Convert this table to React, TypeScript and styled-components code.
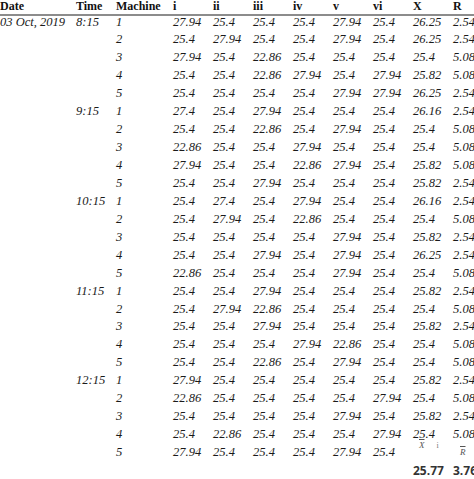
import React from "react"
import styled, { createGlobalStyle } from "styled-components"

const GlobalStyle = createGlobalStyle`
  html, body {
    margin: 0;
    padding: 0;
    background: #fff;
    overflow: hidden;
  }
  body {
    font-family: "Liberation Serif", "Times New Roman", serif;
  }
`

const Table = styled.div`
  width: 474px;
  height: 479px;
  overflow: hidden;
  color: #1a1a1a;
`

const cols = "76px 40px 57px repeat(8, 40px)"

const HeaderRow = styled.div`
  display: grid;
  grid-template-columns: ${cols};
  height: 14px;
  border-bottom: 2px solid #8c8c8c;
  width: 493px;
`

const HeadCell = styled.div`
  font-weight: bold;
  font-size: 12px;
  line-height: 12px;
  color: #111;
  white-space: nowrap;
`

const Body = styled.div`
  margin-top: -2.5px;
`

const Row = styled.div`
  display: grid;
  grid-template-columns: ${cols};
  height: 17.94px;
  width: 493px;
`

const Cell = styled.div<{ $bold?: boolean }>`
  font-style: italic;
  font-size: 12.5px;
  line-height: 17.94px;
  white-space: nowrap;
  ${(p) =>
    p.$bold &&
    `
    font-style: normal;
    font-family: "Open Sans", "Liberation Sans", sans-serif;
    font-weight: bold;
    font-size: 12px;
    color: #333;
  `}
`

const MarkCell = styled.div<{ $top: number; $left: number }>`
  align-self: start;
  display: flex;
  align-items: baseline;
  margin-top: ${(p) => p.$top}px;
  padding-left: ${(p) => p.$left}px;
  font-size: 9px;
  line-height: 9px;
  color: #555;
`

const Mark = styled.span`
  font-style: italic;
  text-decoration: overline;
  text-decoration-thickness: 0.6px;
`

const Tick = styled.span`
  font-size: 8px;
  color: #777;
  margin-left: 12px;
`

const headers = ["Date", "Time", "Machine", "i", "ii", "iii", "iv", "v", "vi", "X", "R"]

const times = ["8:15", "9:15", "10:15", "11:15", "12:15"]

const data: string[][] = [
  ["27.94", "25.4", "25.4", "25.4", "27.94", "25.4", "26.25", "2.54"],
  ["25.4", "27.94", "25.4", "25.4", "27.94", "25.4", "26.25", "2.54"],
  ["27.94", "25.4", "22.86", "25.4", "25.4", "25.4", "25.4", "5.08"],
  ["25.4", "25.4", "22.86", "27.94", "25.4", "27.94", "25.82", "5.08"],
  ["25.4", "25.4", "25.4", "25.4", "27.94", "27.94", "26.25", "2.54"],

  ["27.4", "25.4", "27.94", "25.4", "25.4", "25.4", "26.16", "2.54"],
  ["25.4", "25.4", "22.86", "25.4", "27.94", "25.4", "25.4", "5.08"],
  ["22.86", "25.4", "25.4", "27.94", "25.4", "25.4", "25.4", "5.08"],
  ["27.94", "25.4", "25.4", "22.86", "27.94", "25.4", "25.82", "5.08"],
  ["25.4", "25.4", "27.94", "25.4", "25.4", "25.4", "25.82", "2.54"],

  ["25.4", "27.4", "25.4", "27.94", "25.4", "25.4", "26.16", "2.54"],
  ["25.4", "27.94", "25.4", "22.86", "25.4", "25.4", "25.4", "5.08"],
  ["25.4", "25.4", "25.4", "25.4", "27.94", "25.4", "25.82", "2.54"],
  ["25.4", "25.4", "27.94", "25.4", "27.94", "25.4", "26.25", "2.54"],
  ["22.86", "25.4", "25.4", "25.4", "27.94", "25.4", "25.4", "5.08"],

  ["25.4", "25.4", "27.94", "25.4", "25.4", "25.4", "25.82", "2.54"],
  ["25.4", "27.94", "22.86", "25.4", "25.4", "25.4", "25.4", "5.08"],
  ["25.4", "25.4", "27.94", "25.4", "25.4", "25.4", "25.82", "2.54"],
  ["25.4", "25.4", "25.4", "27.94", "22.86", "25.4", "25.4", "5.08"],
  ["25.4", "25.4", "22.86", "25.4", "27.94", "25.4", "25.4", "5.08"],

  ["27.94", "25.4", "25.4", "25.4", "25.4", "25.4", "25.82", "2.54"],
  ["22.86", "25.4", "25.4", "25.4", "25.4", "27.94", "25.4", "5.08"],
  ["25.4", "25.4", "25.4", "25.4", "27.94", "25.4", "25.82", "2.54"],
  ["25.4", "22.86", "25.4", "25.4", "25.4", "27.94", "25.4", "5.08"],
  ["27.94", "25.4", "25.4", "25.4", "27.94", "25.4", "", ""],
]

export default function App() {
  return (
    <>
      <GlobalStyle />
      <Table>
        <HeaderRow>
          {headers.map((h) => (
            <HeadCell key={h}>{h}</HeadCell>
          ))}
        </HeaderRow>
        <Body>
          {data.map((vals, i) => {
            const last = i === data.length - 1
            return (
              <Row key={i}>
                <Cell>{i === 0 ? "03 Oct, 2019" : ""}</Cell>
                <Cell>{i % 5 === 0 ? times[i / 5] : ""}</Cell>
                <Cell>{(i % 5) + 1}</Cell>
                {vals.slice(0, 6).map((v, j) => (
                  <Cell key={j}>{v}</Cell>
                ))}
                {last ? (
                  <>
                    <MarkCell $top={-3} $left={6}>
                      <Mark>X</Mark>
                      <Tick>i</Tick>
                    </MarkCell>
                    <MarkCell $top={4} $left={7}>
                      <Mark>R</Mark>
                    </MarkCell>
                  </>
                ) : (
                  <>
                    <Cell>{vals[6]}</Cell>
                    <Cell>{vals[7]}</Cell>
                  </>
                )}
              </Row>
            )
          })}
          <Row>
            {Array.from({ length: 9 }).map((_, k) => (
              <Cell key={k} />
            ))}
            <Cell $bold>25.77</Cell>
            <Cell $bold>3.76</Cell>
          </Row>
        </Body>
      </Table>
    </>
  )
}
